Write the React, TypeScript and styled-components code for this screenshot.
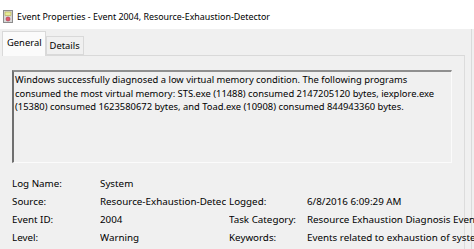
import styled, { createGlobalStyle } from "styled-components";

const GlobalStyle = createGlobalStyle`
  html, body {
    margin: 0;
    padding: 0;
    background: #f0f0f0;
    overflow: hidden;
  }
  body {
    width: 474px;
    height: 249px;
    font-family: "Noto Sans", "Open Sans", sans-serif;
    font-size: 9.4px;
    color: #000;
  }
`;

type Field = { label: string; value: string };

const leftFields: Field[] = [
  { label: "Log Name:", value: "System" },
  { label: "Source:", value: "Resource-Exhaustion-Detector" },
  { label: "Event ID:", value: "2004" },
  { label: "Level:", value: "Warning" },
];

const rightFields: (Field | null)[] = [
  null,
  { label: "Logged:", value: "6/8/2016 6:09:29 AM" },
  { label: "Task Category:", value: "Resource Exhaustion Diagnosis Events" },
  { label: "Keywords:", value: "Events related to exhaustion of system commit limit (virtual memory)." },
];

const message =
  "Windows successfully diagnosed a low virtual memory condition. The following programs consumed the most virtual memory: STS.exe (11488) consumed 2147205120 bytes, iexplore.exe (15380) consumed 1623580672 bytes, and Toad.exe (10908) consumed 844943360 bytes.";

const EventIcon = () => (
  <svg width="10" height="13" viewBox="0 0 10 13">
    <rect x="0.5" y="0.5" width="9" height="12" fill="#d8d8d8" stroke="#8c8c8c" />
    <rect x="2" y="2" width="6" height="3.5" fill="#e6ee9a" stroke="#b5a94a" strokeWidth="0.6" />
    <circle cx="5" cy="9" r="2" fill="#e2596a" stroke="#a8344a" strokeWidth="0.6" />
  </svg>
);

export default function App() {
  return (
    <>
      <GlobalStyle />
      <Window>
        <TitleBar>
          <EventIcon />
          <Title>Event Properties - Event 2004, Resource-Exhaustion-Detector</Title>
        </TitleBar>
        <Body>
          <TabStrip>
            <Tab active>General</Tab>
            <Tab>Details</Tab>
          </TabStrip>
          <Panel>
            <MessageBox>{message}</MessageBox>
            <Fields>
              {leftFields.map((f, i) => {
                const r = rightFields[i];
                return (
                  <FieldRow key={f.label}>
                    <Label>{f.label}</Label>
                    <Value>{f.value}</Value>
                    <Label>{r ? r.label : ""}</Label>
                    <Value>{r ? r.value : ""}</Value>
                  </FieldRow>
                );
              })}
            </Fields>
          </Panel>
        </Body>
      </Window>
    </>
  );
}

const Window = styled.div`
  width: 474px;
  height: 249px;
  display: flex;
  flex-direction: column;
`;

const TitleBar = styled.div`
  height: 29px;
  background: #fff;
  display: flex;
  align-items: center;
  gap: 4px;
  padding: 3px 0 0 3px;
  box-sizing: border-box;
`;

const Title = styled.span`
  font-size: 8.9px;
  color: #000;
  white-space: nowrap;
`;

const Body = styled.div`
  flex: 1;
  display: flex;
  flex-direction: column;
  padding: 2px 3px 0 2px;
  border-right: 1px solid #dadada;
  margin-right: 2px;
`;

const TabStrip = styled.div`
  display: flex;
  align-items: flex-end;
  height: 24px;
`;

const Tab = styled.div<{ active?: boolean }>`
  box-sizing: border-box;
  height: ${({ active }) => (active ? "25px" : "19px")};
  padding: ${({ active }) => (active ? "0 3px 4px 4px" : "0 3px")};
  display: flex;
  align-items: center;
  background: ${({ active }) => (active ? "#fbfbfb" : "#f0f0f0")};
  border: 1px solid #d9d9d9;
  border-bottom: ${({ active }) => (active ? "none" : "1px solid #d9d9d9")};
  margin-bottom: ${({ active }) => (active ? "-1px" : "0")};
  position: relative;
  z-index: ${({ active }) => (active ? 1 : 0)};
  white-space: nowrap;
  font-size: 9.4px;
`;

const Panel = styled.div`
  flex: 1;
  border-top: 1px solid #d9d9d9;
  border-right: 1px solid #dcdcdc;
  margin-right: 3px;
  padding: 14px 10px 0 10px;
  display: flex;
  flex-direction: column;
`;

const MessageBox = styled.div`
  height: 93px;
  box-sizing: border-box;
  width: 440px;
  border-top: 2px solid #8f8f8f;
  border-left: 2px solid #6f6f6f;
  border-right: 1px solid #fbfbfb;
  border-bottom: 1px solid #fbfbfb;
  padding: 1px 4px 0 1px;
  line-height: 13.5px;
`;

const Fields = styled.div`
  margin-top: 11px;
  display: flex;
  flex-direction: column;
`;

const FieldRow = styled.div`
  display: grid;
  grid-template-columns: 88px 129px 78px 180px;
  height: 18px;
  align-items: center;
  white-space: nowrap;
  font-size: 9.8px;
`;

const Label = styled.span`
  overflow: hidden;
`;

const Value = styled.span`
  overflow: hidden;
  margin-right: 3px;
`;
